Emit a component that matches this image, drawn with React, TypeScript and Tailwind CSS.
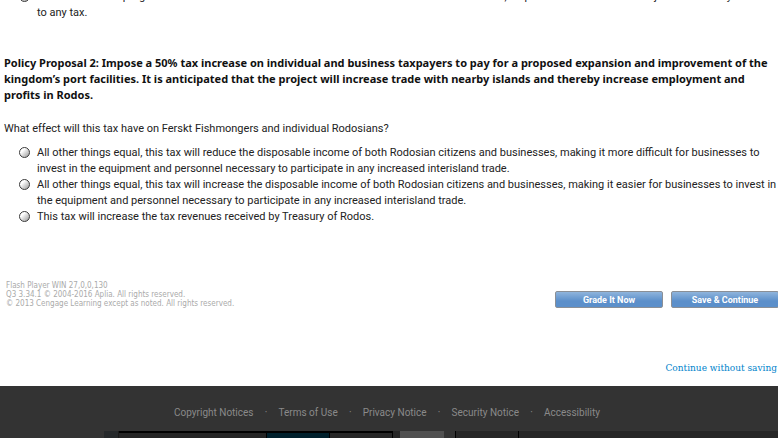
import React from "react";

const options = [
  [
    "All other things equal, this tax will reduce the disposable income of both Rodosian citizens and businesses, making it more difficult for businesses to",
    "invest in the equipment and personnel necessary to participate in any increased interisland trade.",
  ],
  [
    "All other things equal, this tax will increase the disposable income of both Rodosian citizens and businesses, making it easier for businesses to invest in",
    "the equipment and personnel necessary to participate in any increased interisland trade.",
  ],
  ["This tax will increase the tax revenues received by Treasury of Rodos."],
];

const links = ["Copyright Notices", "Terms of Use", "Privacy Notice", "Security Notice", "Accessibility"];

function Option({ name, id, lines }: { name: string; id: string; lines: string[] }) {
  return (
    <div className="flex items-start pl-[19px]">
      <input
        type="radio"
        name={name}
        id={id}
        className="mt-[2px] mr-[7px] block size-[11px] shrink-0 appearance-none rounded-full border border-[#3a3a3a] bg-linear-to-br from-white from-30% to-[#999] checked:bg-[#555]"
      />
      <label htmlFor={id} className="whitespace-nowrap">
        {lines.map((line) => (
          <span key={line} className="block">
            {line}
          </span>
        ))}
      </label>
    </div>
  );
}

const buttonClass =
  "h-[17px] w-[108px] shrink-0 rounded-[2px] border border-[#8a8f96] bg-linear-to-b from-[#8fb4dc] to-[#5b8fca] to-60% font-['Roboto',sans-serif] text-[9px] leading-[14px] font-bold text-white";

export default function App() {
  return (
    <div className="overflow-hidden bg-white font-['Roboto',sans-serif] text-[11px] leading-4 text-[#222]">
      <main>
        <div className="-mt-[11px]">
          <Option
            name="proposal-1"
            id="p1-last"
            lines={[
              "Because the new program is to be a benefit to all the citizens of Rodos and the businesses there, no person on an island will object to it directly",
              "to any tax.",
            ]}
          />
        </div>
        <h2 className="mt-[34px] pl-1 font-['Noto_Sans',sans-serif] font-bold whitespace-nowrap text-[#111]">
          Policy Proposal 2: Impose a 50% tax increase on individual and business taxpayers to pay for a proposed expansion and improvement of the
          <br />
          kingdom’s port facilities. It is anticipated that the project will increase trade with nearby islands and thereby increase employment and
          <br />
          profits in Rodos.
        </h2>
        <fieldset className="mt-[18px]">
          <legend className="mb-2 pl-1">What effect will this tax have on Ferskt Fishmongers and individual Rodosians?</legend>
          {options.map((lines, i) => (
            <Option key={i} name="proposal-2" id={"p2-" + i} lines={lines} />
          ))}
        </fieldset>
        <div className="mt-14 flex items-start justify-between pl-1.5">
          <p className="font-['DejaVu_Sans_Condensed','DejaVu_Sans',sans-serif] text-[8px] leading-[9px] text-[#aaa]">
            Flash Player WIN 27,0,0,130
            <br />
            Q3 3.34.1 © 2004-2016 Aplia. All rights reserved.
            <br />© 2013 Cengage Learning except as noted. All rights reserved.
          </p>
          <div className="-mr-px mt-[10px] flex gap-2">
            <button type="button" className={buttonClass}>Grade It Now</button>
            <button type="button" className={buttonClass}>Save &amp; Continue</button>
          </div>
        </div>
        <div className="mt-[52px] pr-px pb-[10px] text-right">
          <a href="#continue" className="font-['DejaVu_Serif_Condensed','DejaVu_Serif',serif] text-[10px] text-[#0083cb]">
            Continue without saving
          </a>
        </div>
      </main>
      <footer className="bg-[#333]">
        <nav className="flex h-[45px] items-center justify-center pt-2 pr-1 font-['Roboto',sans-serif] text-[10px] text-[#8a8a8a]">
          {links.map((l, i) => (
            <React.Fragment key={l}>
              {i > 0 && <span className="w-[25px] text-center">·</span>}
              <a href="#footer">{l}</a>
            </React.Fragment>
          ))}
        </nav>
        <div className="flex h-[7px] pl-[104px]">
          <div className="w-[15px] border-r border-[#1a1a1a] bg-[#25282a]" />
          <div className="w-[147px] border-t-2 border-black bg-[#242424]" />
          <div className="w-[64px] border-x border-t-2 border-black bg-[#00202c]" />
          <div className="w-[63px] border-t-2 border-r border-black bg-[#262626]" />
          <div className="w-[7px] bg-[#262626]" />
          <div className="w-[44px] bg-[#505050]" />
          <div className="w-[12px] border-r border-black bg-[#333]" />
          <div className="w-[63px] border-r border-black bg-[#262626]" />
          <div className="flex-1 bg-[#262626]" />
        </div>
      </footer>
    </div>
  );
}
